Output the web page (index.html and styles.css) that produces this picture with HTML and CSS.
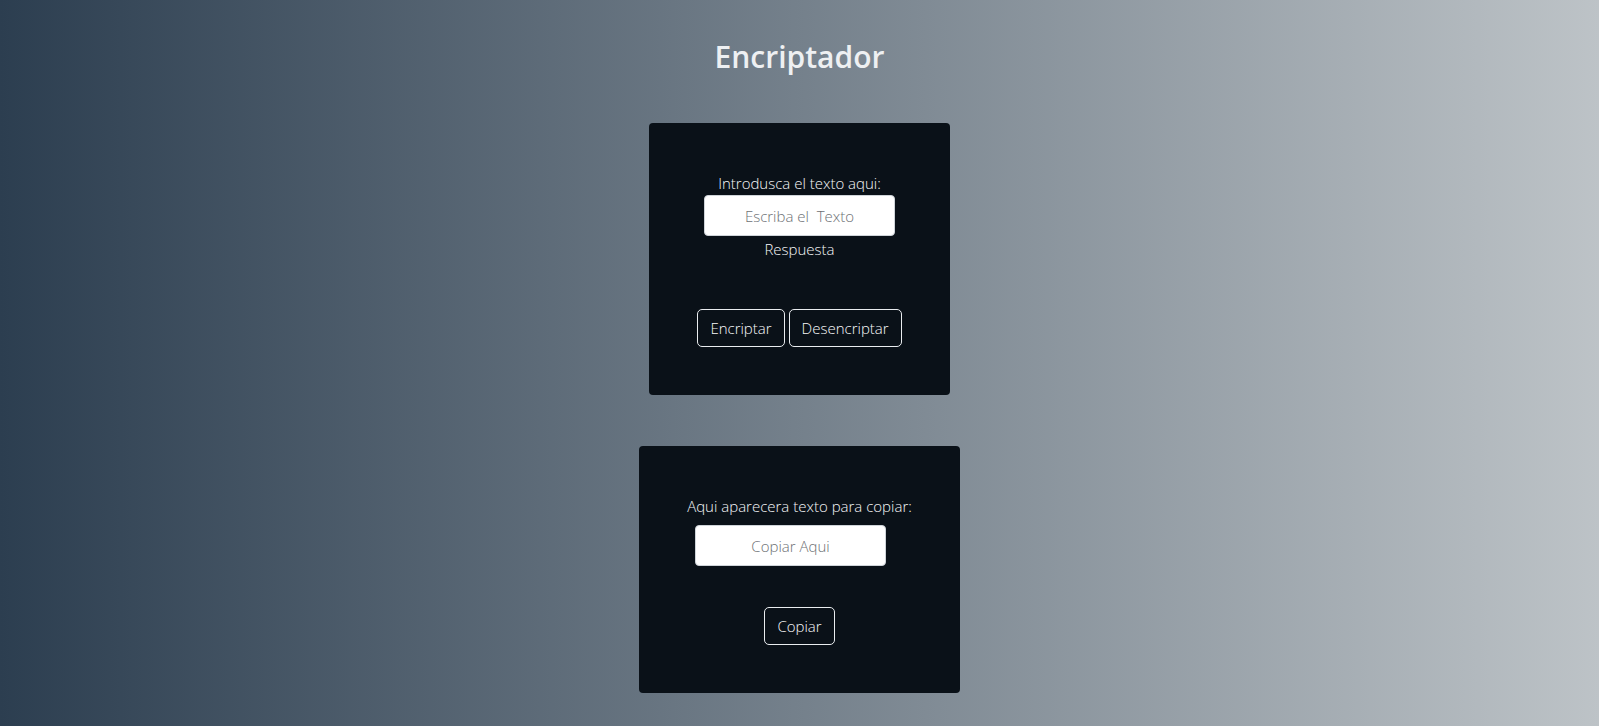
FILE: index.html
```html
<!DOCTYPE html>
<html lang="es">
<head>
<meta charset="utf-8">
<title>Encriptador</title>
<link rel="stylesheet" href="styles.css">
</head>
<body>
  <main class="page">
    <h1 class="title">Encriptador</h1>
    <section class="card card-top">
      <label class="label" for="texto">Introdusca el texto aqui:</label>
      <input class="field" id="texto" type="text" placeholder="Escriba el  Texto">
      <p class="answer">Respuesta</p>
      <div class="actions">
        <button class="btn">Encriptar</button>
        <button class="btn">Desencriptar</button>
      </div>
    </section>
    <section class="card card-bottom">
      <label class="label" for="copia">Aqui aparecera texto para copiar:</label>
      <input class="field field-shift" id="copia" type="text" placeholder="Copiar Aqui">
      <div class="actions actions-copy">
        <button class="btn">Copiar</button>
      </div>
    </section>
  </main>
</body>
</html>
```

FILE: styles.css
```css
* { box-sizing: border-box; }

html, body { height: 100%; }

body {
  margin: 0;
  background: linear-gradient(to right, #2c3e50, #bdc3c7);
  font-family: "Open Sans", "Noto Sans", sans-serif;
  color: #f6f7f8;
}

.page {
  display: flex;
  flex-direction: column;
  align-items: center;
  padding-top: 38px;
}

.title {
  margin: 0 0 47px;
  font-size: 30px;
  line-height: 38px;
  font-weight: 600;
  color: #eef0f2;
}

.card {
  display: flex;
  flex-direction: column;
  align-items: center;
  background: #0a1118;
  border-radius: 4px;
  padding: 48px;
  width: fit-content;
}

.card-bottom { margin-top: 51px; }

.label {
  font-size: 15px;
  line-height: 24px;
  font-weight: 300;
  white-space: nowrap;
}

.field {
  width: 191px;
  height: 41px;
  border: 1px solid #cfd4d9;
  border-radius: 4px;
  background: #fff;
  text-align: center;
  font-family: inherit;
  font-size: 15px;
  font-weight: 300;
  color: #333;
  outline: none;
}

.field::placeholder { color: #6c6f73; }

.field-shift {
  margin-top: 7px;
  margin-right: 18px;
}

.answer {
  margin: 1px 0 48px;
  font-size: 15px;
  line-height: 24px;
  font-weight: 300;
}

.actions {
  display: flex;
  gap: 4px;
}

.actions-copy { margin-top: 41px; }

.btn {
  height: 38px;
  padding: 0 12px;
  border: 1px solid #e9ecef;
  border-radius: 5px;
  background: transparent;
  color: #f8f9fa;
  font-family: inherit;
  font-size: 15px;
  font-weight: 300;
  cursor: pointer;
}
```
